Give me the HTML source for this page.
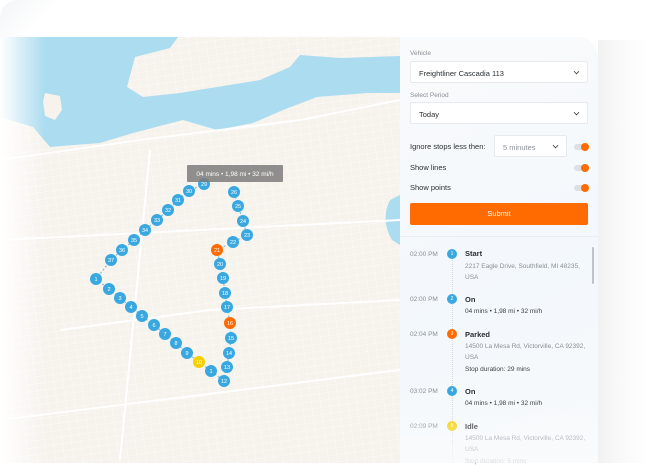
<!DOCTYPE html>
<html><head><meta charset="utf-8"><style>
*{margin:0;padding:0;box-sizing:border-box}
body{width:651px;height:463px;overflow:hidden;background:#fff;font-family:"Liberation Sans",sans-serif;position:relative}
.bgr{position:absolute;left:598px;top:40px;width:53px;height:423px;background:linear-gradient(90deg,#f1f1f1,#f9f9f9 40%,#fff)}
.card{position:absolute;left:0;top:0;width:598px;height:463px;background:#fff;border-radius:18px 0 0 0}
.map{position:absolute;left:0;top:37px;width:400px;height:426px;overflow:hidden;background:#f6f2ec}
.panel{position:absolute;left:400px;top:37px;width:198px;height:426px;background:linear-gradient(160deg,#f9fafb,#f3f8fc 60%,#f8fafb);border-radius:0 20px 0 0}
.lbl{position:absolute;left:10px;font-size:6.5px;color:#8a8f96}
.sel{position:absolute;left:10px;width:178px;height:22px;background:#fff;border:1px solid #e6eaee;border-radius:2px;font-size:7.5px;color:#2b2f33;padding:7px 0 0 8px}
.chev{position:absolute;right:8px;top:7px;width:5px;height:5px;border-right:1px solid #444;border-bottom:1px solid #444;transform:rotate(45deg) scale(.8)}
.row{position:absolute;left:10px;font-size:7.5px;color:#2b2f33}
.tg{position:absolute;left:174px;width:14px;height:6px;border-radius:3px;background:#dde0e3}
.tg:after{content:"";position:absolute;right:-1px;top:-1.5px;width:8px;height:8px;border-radius:50%;background:#ff6b00}
.btn{position:absolute;left:10px;top:166px;width:178px;height:22px;background:#ff6b00;border-radius:2px;color:#fff;font-size:7.5px;text-align:center;line-height:22px}
.t{position:absolute;left:10px;font-size:6.5px;color:#8a8f96}
.dot{position:absolute;left:47px;width:10px;height:10px;border-radius:50%;color:#fff;font-size:5px;text-align:center;line-height:10px}
.h{position:absolute;left:65px;font-size:7.5px;font-weight:bold;color:#2b2f33}
.a{position:absolute;left:65px;font-size:6.5px;color:#8a8f96}
.s{position:absolute;left:65px;font-size:6.5px;color:#3b3f43}
</style></head><body>
<div class="bgr"></div>
<div class="card"></div>
<div style="position:absolute;left:0;top:0;width:60px;height:40px;border-radius:18px 0 0 0;background:linear-gradient(135deg,#f2f4f6,#fff 60%)"></div>
<div class="map">
<svg width="400" height="426" viewBox="0 37 400 426" xmlns="http://www.w3.org/2000/svg" font-family="Liberation Sans">
<defs><pattern id="g" width="9" height="7" patternUnits="userSpaceOnUse" patternTransform="rotate(-8)"><path d="M0 0H9M0 0V7" stroke="#fff" stroke-width=".8" opacity=".9"/></pattern>
<linearGradient id="f" x1="0" x2="1"><stop offset="0" stop-color="#fff"/><stop offset="1" stop-color="#fff" stop-opacity="0"/></linearGradient></defs>
<rect x="0" y="37" width="400" height="426" fill="url(#g)"/>
<path d="M0 37H178L170 48L135 57L127 87L143 97L180 93L217 87L260 80L290 67L300 55L340 58L400 56V93L367 93L317 97L283 110L253 123L217 130L183 120L133 133L100 143L50 147L33 127L0 117Z" fill="#acdcf0"/>
<path d="M45 93L60 96L62 110L55 120L45 116L43 102Z" fill="#f6f2ec"/>
<path d="M390 200Q380 220 392 240L400 245V195Z" fill="#acdcf0"/>
<g stroke="#fff" stroke-width="2" fill="none"><path d="M0 160L140 140L300 120L400 100"/><path d="M120 460L150 150"/><path d="M60 330L210 310L400 300"/><path d="M0 420L400 370"/><path d="M0 240L400 220"/></g>
<g stroke="#7fbfe0" stroke-width="1.2" fill="none" stroke-dasharray="2 2"><polyline points="96,279 109,289 120,298 131,307 142,316 154,325 165,334 176,343 187,353 199,362 211,371 224,381 227,367 229,353 231,338 230,323 227,307 225,293 223,278 220,264 217,250 233,242 247,235 243,221 238,206 234,192"/><polyline points="204,184 189,191 178,200 168,210 157,220 145,230 134,240 122,250 111,260 96,279"/></g>
<g font-size="5.5" fill="#fff" text-anchor="middle">
<g fill="#3aa8e0"><circle cx="96" cy="279" r="6"/><circle cx="109" cy="289" r="6"/><circle cx="120" cy="298" r="6"/><circle cx="131" cy="307" r="6"/><circle cx="142" cy="316" r="6"/><circle cx="154" cy="325" r="6"/><circle cx="165" cy="334" r="6"/><circle cx="176" cy="343" r="6"/><circle cx="187" cy="353" r="6"/><circle cx="211" cy="371" r="6"/><circle cx="224" cy="381" r="6"/><circle cx="227" cy="367" r="6"/><circle cx="229" cy="353" r="6"/><circle cx="231" cy="338" r="6"/><circle cx="227" cy="307" r="6"/><circle cx="225" cy="293" r="6"/><circle cx="223" cy="278" r="6"/><circle cx="220" cy="264" r="6"/><circle cx="233" cy="242" r="6"/><circle cx="247" cy="235" r="6"/><circle cx="243" cy="221" r="6"/><circle cx="238" cy="206" r="6"/><circle cx="234" cy="192" r="6"/><circle cx="204" cy="184" r="6"/><circle cx="189" cy="191" r="6"/><circle cx="178" cy="200" r="6"/><circle cx="168" cy="210" r="6"/><circle cx="157" cy="220" r="6"/><circle cx="145" cy="230" r="6"/><circle cx="134" cy="240" r="6"/><circle cx="122" cy="250" r="6"/><circle cx="111" cy="260" r="6"/></g>
<circle cx="199" cy="362" r="6" fill="#f5d000"/><circle cx="230" cy="323" r="6" fill="#ff6b00"/><circle cx="217" cy="250" r="6" fill="#ff6b00"/>
<text x="96" y="281">1</text><text x="109" y="291">2</text><text x="120" y="300">3</text><text x="131" y="309">4</text><text x="142" y="318">5</text><text x="154" y="327">6</text><text x="165" y="336">7</text><text x="176" y="345">8</text><text x="187" y="355">9</text><text x="199" y="364">10</text><text x="211" y="373">1</text><text x="224" y="383">12</text><text x="227" y="369">13</text><text x="229" y="355">14</text><text x="231" y="340">15</text><text x="230" y="325">16</text><text x="227" y="309">17</text><text x="225" y="295">18</text><text x="223" y="280">19</text><text x="220" y="266">20</text><text x="217" y="252">21</text><text x="233" y="244">22</text><text x="247" y="237">23</text><text x="243" y="223">24</text><text x="238" y="208">25</text><text x="234" y="194">26</text><text x="204" y="186">29</text><text x="189" y="193">30</text><text x="178" y="202">31</text><text x="168" y="212">32</text><text x="157" y="222">33</text><text x="145" y="232">34</text><text x="134" y="242">35</text><text x="122" y="252">36</text><text x="111" y="262">37</text></g>
<rect x="187" y="165" width="96" height="17" rx="1" fill="#7d7d7d" opacity=".85"/>
<text x="235" y="176" font-size="6.5" fill="#fff" text-anchor="middle">04 mins • 1,98 mi • 32 mi/h</text>
<rect x="0" y="37" width="45" height="426" fill="url(#f)"/>
</svg>
</div>
<div class="panel">
<div class="lbl" style="top:13px">Vehicle</div>
<div class="sel" style="top:24px">Freightliner Cascadia 113<i class="chev"></i></div>
<div class="lbl" style="top:55px">Select Period</div>
<div class="sel" style="top:65px">Today<i class="chev"></i></div>
<div class="row" style="top:105px">Ignore stops less then:</div>
<div class="sel" style="top:98px;left:94px;width:73px;color:#8a8f96">5 minutes<i class="chev"></i></div>
<div class="tg" style="top:107px"></div>
<div class="row" style="top:126px">Show lines</div><div class="tg" style="top:128px"></div>
<div class="row" style="top:146px">Show points</div><div class="tg" style="top:148px"></div>
<div class="btn">Submit</div>
<div style="position:absolute;left:0;top:199px;width:198px;height:1px;background:#e8eef3"></div>
<div style="position:absolute;left:52px;top:220px;height:206px;border-left:1px dotted #d6dade"></div>
<div style="position:absolute;left:192px;top:210px;width:2px;height:37px;background:#bfc3c7;border-radius:1px"></div>
<div class="t" style="top:214px">02:00 PM</div><div class="dot" style="top:212px;background:#3aa8e0">1</div>
<div class="h" style="top:212px">Start</div><div class="a" style="top:226px">2217 Eagle Drive, Southfield, MI 48235,</div><div class="a" style="top:237px">USA</div>
<div class="t" style="top:259px">02:00 PM</div><div class="dot" style="top:257px;background:#3aa8e0">2</div>
<div class="h" style="top:258px">On</div><div class="s" style="top:271px">04 mins • 1,98 mi • 32 mi/h</div>
<div class="t" style="top:294px">02:04 PM</div><div class="dot" style="top:292px;background:#ff6b00">3</div>
<div class="h" style="top:293px">Parked</div><div class="a" style="top:306px">14500 La Mesa Rd, Victorville, CA 92392,</div><div class="a" style="top:317px">USA</div><div class="s" style="top:329px">Stop duration: 29 mins</div>
<div class="t" style="top:351px">03:02 PM</div><div class="dot" style="top:349px;background:#3aa8e0">4</div>
<div class="h" style="top:350px">On</div><div class="s" style="top:363px">04 mins • 1,98 mi • 32 mi/h</div>
<div class="t" style="top:386px">02:09 PM</div><div class="dot" style="top:384px;background:#f5d000">5</div>
<div class="h" style="top:385px">Idle</div><div class="a" style="top:398px">14500 La Mesa Rd, Victorville, CA 92392,</div><div class="a" style="top:409px">USA</div><div class="a" style="top:421px">Stop duration: 5 mins</div>
<div style="position:absolute;left:0;top:370px;width:198px;height:56px;background:linear-gradient(rgba(250,251,252,0),rgba(250,251,252,.75))"></div>
</div>
</body></html>
